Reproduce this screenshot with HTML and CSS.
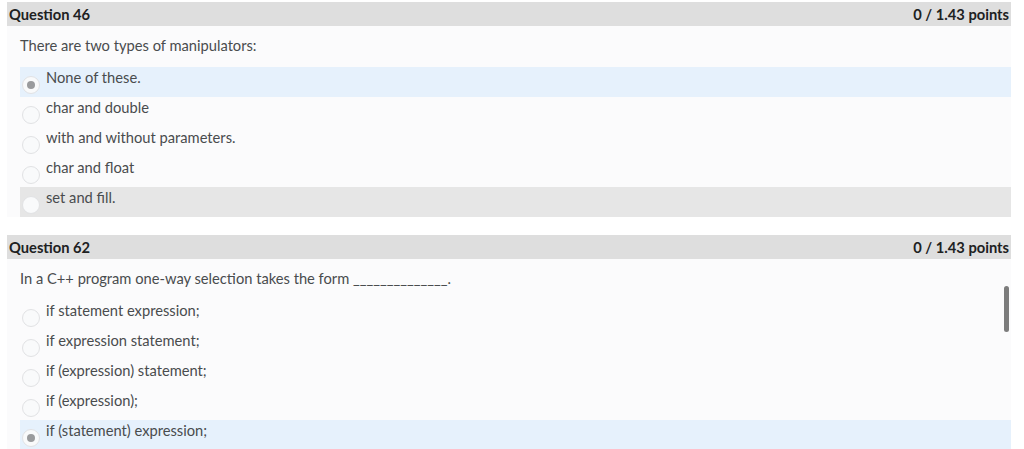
FILE: index.html
```html
<!DOCTYPE html>
<html>
<head>
<meta charset="utf-8">
<link rel="stylesheet" href="styles.css">
</head>
<body>
<div class="page">
  <section class="question">
    <div class="q-head"><span>Question 46</span><span>0 / 1.43 points</span></div>
    <div class="q-body">
      <p class="q-text">There are two types of manipulators:</p>
      <div class="options">
        <div class="opt selected"><span class="radio checked"></span><span class="label">None of these.</span></div>
        <div class="opt"><span class="radio"></span><span class="label">char and double</span></div>
        <div class="opt"><span class="radio"></span><span class="label">with and without parameters.</span></div>
        <div class="opt"><span class="radio"></span><span class="label">char and float</span></div>
        <div class="opt correct"><span class="radio"></span><span class="label">set and fill.</span></div>
      </div>
    </div>
  </section>
  <section class="question">
    <div class="q-head"><span>Question 62</span><span>0 / 1.43 points</span></div>
    <div class="q-body">
      <p class="q-text">In a C++ program one-way selection takes the form ______________.</p>
      <div class="options">
        <div class="opt"><span class="radio"></span><span class="label">if statement expression;</span></div>
        <div class="opt"><span class="radio"></span><span class="label">if expression statement;</span></div>
        <div class="opt"><span class="radio"></span><span class="label">if (expression) statement;</span></div>
        <div class="opt"><span class="radio"></span><span class="label">if (expression);</span></div>
        <div class="opt selected"><span class="radio checked"></span><span class="label">if (statement) expression;</span></div>
      </div>
    </div>
  </section>
  <div class="scrollbar"></div>
</div>
</body>
</html>
```
FILE: styles.css
```css
html, body {
  margin: 0;
  padding: 0;
  background: #ffffff;
}
body {
  font-family: Lato, "Open Sans", sans-serif;
  color: #494c4e;
  font-size: 14.7px;
  overflow: hidden;
}
.page {
  position: relative;
  padding: 2px 13px 0 7px;
  height: 447px;
}
.question {
  margin-bottom: 18px;
}
.q-head {
  display: flex;
  justify-content: space-between;
  align-items: center;
  height: 24px;
  background: #dedede;
  padding: 0 2px;
  font-weight: 700;
  font-size: 14.7px;
  color: #202122;
}
.q-body {
  background: #fbfbfc;
  padding-left: 13px;
}
.q-text {
  margin: 0;
  padding: 9px 0 12px;
  line-height: 20px;
}
.opt {
  display: flex;
  height: 30px;
  padding-left: 2px;
}
.opt.selected {
  background: #e6f1fc;
}
.opt.correct {
  background: #e6e6e6;
}
.radio {
  width: 16px;
  height: 16px;
  margin-top: 9px;
  border: 1px solid #e1e2e4;
  border-radius: 50%;
  background: #f9fafb;
  display: flex;
  align-items: center;
  justify-content: center;
  flex: none;
}
.radio.checked::after {
  content: "";
  width: 8px;
  height: 8px;
  border-radius: 50%;
  background: #9a9b9d;
}
.label {
  margin-left: 6px;
  line-height: 21px;
}
.scrollbar {
  position: absolute;
  left: 1004px;
  top: 286px;
  width: 5px;
  height: 46px;
  border-radius: 3px;
  background: #7c7c7c;
}
```
